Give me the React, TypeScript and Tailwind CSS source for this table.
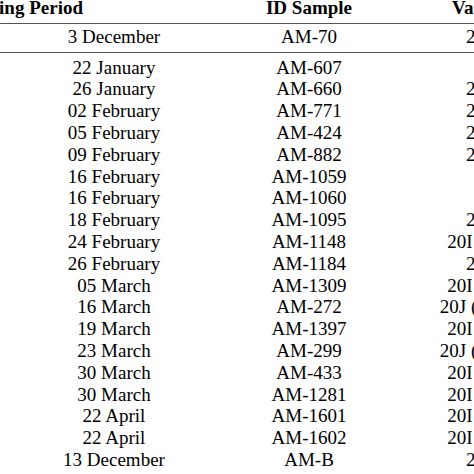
const rows: [string, string, string][] = [
  ["22 January", "AM-607", "20A"],
  ["26 January", "AM-660", "20A (EU2)"],
  ["02 February", "AM-771", "20A (EU2)"],
  ["05 February", "AM-424", "20A (EU2)"],
  ["09 February", "AM-882", "20A (EU2)"],
  ["16 February", "AM-1059", "20A"],
  ["16 February", "AM-1060", "20A"],
  ["18 February", "AM-1095", "20A (EU2)"],
  ["24 February", "AM-1148", "20I (Alpha, V1)"],
  ["26 February", "AM-1184", "20A (EU2)"],
  ["05 March", "AM-1309", "20I (Alpha, V1)"],
  ["16 March", "AM-272", "20J (Gamma, V3)"],
  ["19 March", "AM-1397", "20I (Alpha, V1)"],
  ["23 March", "AM-299", "20J (Gamma, V3)"],
  ["30 March", "AM-433", "20I (Alpha, V1)"],
  ["30 March", "AM-1281", "20I (Alpha, V1)"],
  ["22 April", "AM-1601", "20I (Alpha, V1)"],
  ["22 April", "AM-1602", "20I (Alpha, V1)"],
  ["13 December", "AM-B", "20A (EU2)"],
]

export default function App() {
  return (
    <div className="w-[474px] h-[474px] overflow-hidden bg-white text-black text-[19px] font-['Liberation_Serif',serif]">
      <div className="w-[626px]">
        {/* Header */}
        <div className="grid grid-cols-[228px_162px_236px] leading-[15px] pb-[7.7px] border-b-[1.5px] border-[#555] font-bold">
          <div className="flex justify-end w-[83px] whitespace-nowrap">
            <span>Sampling Period</span>
          </div>
          <div className="text-center whitespace-nowrap">ID Sample</div>
          <div className="pl-[62px] whitespace-nowrap">Variant</div>
        </div>

        {/* 2020 row */}
        <div className="grid grid-cols-[228px_162px_236px] leading-[21.8px] pt-[2.5px] pb-[4.2px] border-b-[1.5px] border-[#555]">
          <div className="text-center whitespace-nowrap">3 December</div>
          <div className="text-center whitespace-nowrap">AM-70</div>
          <div className="text-center whitespace-nowrap">20A (EU2)</div>
        </div>

        {/* 2021 rows */}
        <div className="pt-[3.5px] leading-[21.8px]">
          {rows.map((r, i) => (
            <div key={i} className="grid grid-cols-[228px_162px_236px]">
              <div className="text-center whitespace-nowrap">{r[0]}</div>
              <div className="text-center whitespace-nowrap">{r[1]}</div>
              <div className="text-center whitespace-nowrap">{r[2]}</div>
            </div>
          ))}
        </div>
      </div>
    </div>
  )
}
